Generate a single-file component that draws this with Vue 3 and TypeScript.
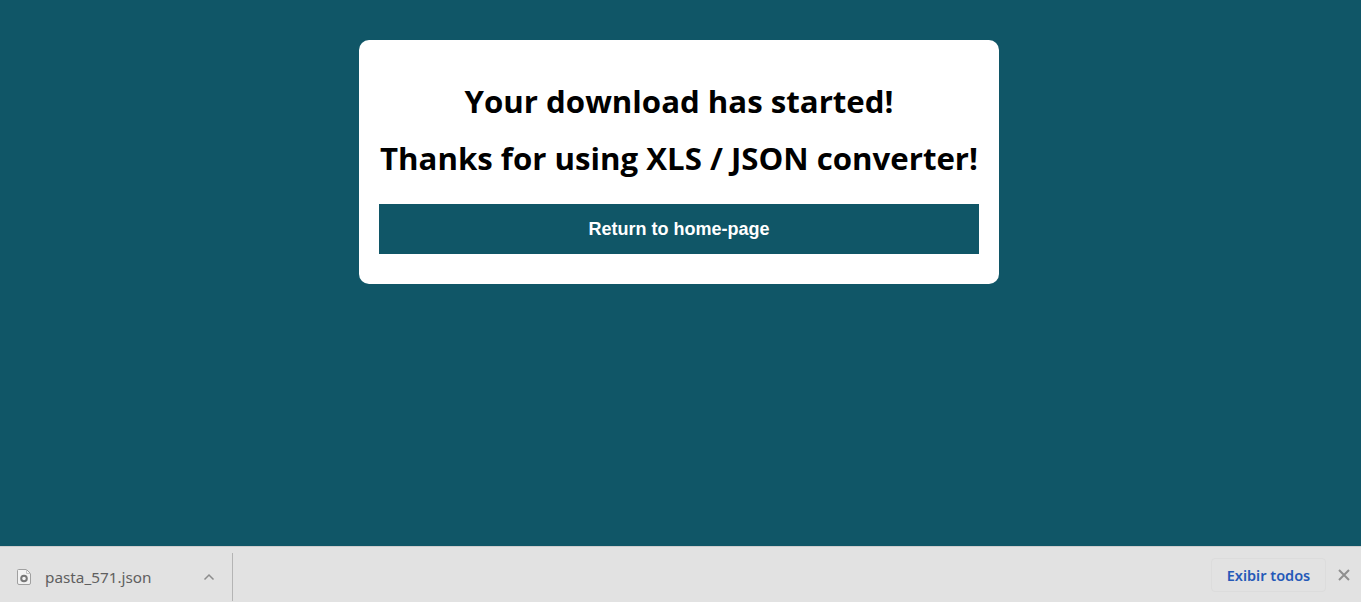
<script setup lang="ts">
const fileName: string = 'pasta_571.json'
</script>

<template>
  <div class="window">
    <main class="page">
      <section class="card">
        <h2 class="title">Your download has started!</h2>
        <h2 class="title second">Thanks for using XLS / JSON converter!</h2>
        <button class="home" type="button">Return to home-page</button>
      </section>
    </main>
    <footer class="shelf">
      <div class="item">
        <svg class="file" width="16" height="18" viewBox="0 0 16 18" fill="none">
          <path d="M2.5 1.5H10.5L14.5 5.5V15A1.5 1.5 0 0 1 13 16.5H3A1.5 1.5 0 0 1 1.5 15V2.5A1 1 0 0 1 2.5 1.5Z" fill="#f2f2f2" stroke="#a0a0a0" stroke-width="1"/>
          <path d="M10.5 1.5V5.5H14.5" stroke="#c4c4c4" stroke-width="1"/>
          <circle cx="8" cy="10.5" r="2.8" fill="none" stroke="#777" stroke-width="2"/>
        </svg>
        <span class="name">{{ fileName }}</span>
        <svg class="chev" width="12" height="8" viewBox="0 0 12 8" fill="none">
          <path d="M1.5 6.5L6 2L10.5 6.5" stroke="#8c8c8c" stroke-width="1.5"/>
        </svg>
      </div>
      <div class="divider"></div>
      <div class="actions">
        <button class="all" type="button">Exibir todos</button>
        <svg class="close" width="12" height="12" viewBox="0 0 12 12" fill="none">
          <path d="M1 1L11 11M11 1L1 11" stroke="#8f8f8f" stroke-width="2"/>
        </svg>
      </div>
    </footer>
  </div>
</template>

<style scoped>
.window {
  height: 602px;
  display: flex;
  flex-direction: column;
  overflow: hidden;
}
.page {
  height: 546px;
  background: #105667;
  display: flex;
  justify-content: center;
  align-items: flex-start;
  padding: 40px 3px 0 0;
  box-sizing: border-box;
}
.card {
  width: 640px;
  height: 244px;
  box-sizing: border-box;
  background: #fff;
  border-radius: 10px;
  padding: 39px 20px 30px;
  display: flex;
  flex-direction: column;
}
.title {
  margin: 0;
  font: 700 31.2px/44px "Open Sans", sans-serif;
  color: #000;
  text-align: center;
  white-space: nowrap;
}
.second {
  margin-top: 13px;
}
.home {
  margin-top: 24px;
  height: 50px;
  border: 0;
  background: #105667;
  color: #fff;
  font: 700 18px "Liberation Sans", sans-serif;
}
.shelf {
  height: 56px;
  box-sizing: border-box;
  background: #e2e2e2;
  border-top: 1px solid #cdcdcd;
  display: flex;
  align-items: flex-end;
}
.item {
  width: 232px;
  height: 48px;
  display: flex;
  align-items: center;
  padding: 0 0 3px 16px;
  box-sizing: border-box;
  flex: none;
}
.name {
  margin-left: 13px;
  font: 400 15.3px "Noto Sans", sans-serif;
  color: #5f5f5f;
}
.chev {
  margin-left: 51px;
}
.divider {
  width: 1px;
  height: 48px;
  background: #b4b4b4;
  flex: none;
  margin-bottom: 1px;
}
.actions {
  margin-left: auto;
  height: 55px;
  display: flex;
  align-items: center;
  padding-top: 1px;
  box-sizing: border-box;
}
.all {
  width: 115px;
  height: 34px;
  box-sizing: border-box;
  border: 1px solid #dcdcdc;
  border-radius: 4px;
  background: #e2e2e2;
  color: #2559b8;
  font: 600 14.5px "Noto Sans", sans-serif;
  padding: 0;
}
.close {
  margin: 0 11px 0 12px;
}
</style>
